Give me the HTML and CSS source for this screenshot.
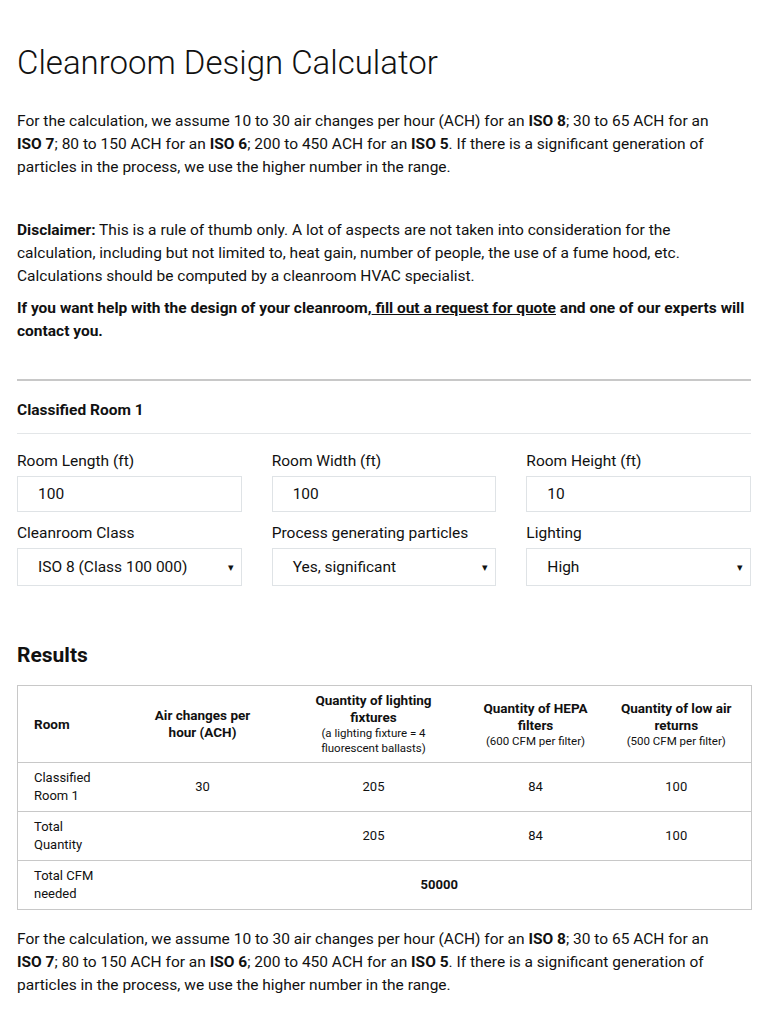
FILE: index.html
```html
<!DOCTYPE html>
<html>
<head>
    <title>Cleanroom Design Calculator</title>
    <link rel="stylesheet" href="styles.css">
</head>
<body>
    <div class="calculator">
        <h1>Cleanroom Design Calculator</h1>
        <p>For the calculation, we assume 10 to 30 air changes per hour (ACH) for an <strong>ISO&nbsp;8</strong>; 30 to 65 ACH for an <strong>ISO&nbsp;7</strong>; 80 to 150 ACH for an <strong>ISO&nbsp;6</strong>; 200 to 450 ACH for an <strong>ISO&nbsp;5</strong>. If there is a significant generation of particles in the process, we use the higher number in the range.</p>
        <p class="disclaimer"><strong>Disclaimer:</strong> This is a rule of thumb only. A lot of aspects are not taken into consideration for the calculation, including but not limited to, heat gain, number of people, the use of a fume hood, etc. Calculations should be computed by a cleanroom HVAC specialist.</p>
        <p class="cta"><strong>If you want help with the design of your cleanroom,<a href="#"> fill out a request for quote</a> and one of our experts will contact you.</strong></p>

        <div class="room">
            <h3 class="room-title">Classified Room 1</h3>
            <div class="fields">
                <label class="field">
                    <span class="field-label">Room Length (ft)</span>
                    <input type="text" value="100">
                </label>
                <label class="field">
                    <span class="field-label">Room Width (ft)</span>
                    <input type="text" value="100">
                </label>
                <label class="field">
                    <span class="field-label">Room Height (ft)</span>
                    <input type="text" value="10">
                </label>
                <label class="field">
                    <span class="field-label">Cleanroom Class</span>
                    <div class="select">
                        <span>ISO 8 (Class 100 000)</span>
                        <span class="arrow">&#9662;</span>
                    </div>
                </label>
                <label class="field">
                    <span class="field-label">Process generating particles</span>
                    <div class="select">
                        <span>Yes, significant</span>
                        <span class="arrow">&#9662;</span>
                    </div>
                </label>
                <label class="field">
                    <span class="field-label">Lighting</span>
                    <div class="select">
                        <span>High</span>
                        <span class="arrow">&#9662;</span>
                    </div>
                </label>
            </div>
        </div>

        <h2>Results</h2>
        <table class="results">
            <colgroup>
                <col class="col-room">
                <col class="col-ach">
                <col class="col-light">
                <col class="col-hepa">
                <col class="col-return">
            </colgroup>
            <thead>
                <tr>
                    <th class="room-col">Room</th>
                    <th>Air changes per hour (ACH)</th>
                    <th>Quantity of lighting fixtures<small>(a lighting fixture = 4 fluorescent ballasts)</small></th>
                    <th class="narrow">Quantity of HEPA filters<small>(600 CFM per filter)</small></th>
                    <th class="narrow">Quantity of low air returns<small>(500 CFM per filter)</small></th>
                </tr>
            </thead>
            <tbody>
                <tr>
                    <td class="room-col">Classified Room 1</td>
                    <td>30</td>
                    <td>205</td>
                    <td>84</td>
                    <td>100</td>
                </tr>
                <tr>
                    <td class="room-col">Total Quantity</td>
                    <td></td>
                    <td>205</td>
                    <td>84</td>
                    <td>100</td>
                </tr>
                <tr>
                    <td class="room-col">Total CFM needed</td>
                    <td colspan="4" class="total">50000</td>
                </tr>
            </tbody>
        </table>

        <p class="footer-note">For the calculation, we assume 10 to 30 air changes per hour (ACH) for an <strong>ISO&nbsp;8</strong>; 30 to 65 ACH for an <strong>ISO&nbsp;7</strong>; 80 to 150 ACH for an <strong>ISO&nbsp;6</strong>; 200 to 450 ACH for an <strong>ISO&nbsp;5</strong>. If there is a significant generation of particles in the process, we use the higher number in the range.</p>
    </div>
</body>
</html>
```

FILE: styles.css
```css
body {
    margin: 0;
    background-color: #ffffff;
    color: #111111;
    font-family: Roboto, "Liberation Sans", sans-serif;
    font-size: 15.5px;
    line-height: 23px;
}

.calculator {
    padding: 0 17px;
}

h1 {
    font-size: 33px;
    font-weight: 300;
    line-height: 40px;
    margin: 43px 0 27px;
}

p {
    margin: 0 0 9px;
}

strong {
    font-weight: 700;
}

.disclaimer {
    margin-top: 40px;
}

.cta a {
    color: #111111;
    text-decoration: underline;
}

/* Room input block */
.room {
    margin-top: 36px;
    border-top: 2px solid #c8c8c8;
}

.room-title {
    font-size: 15.5px;
    font-weight: 700;
    margin: 0;
    padding: 17px 0 11px;
    line-height: 24px;
    border-bottom: 1px solid #e3e6e8;
}

.fields {
    display: grid;
    grid-template-columns: repeat(3, minmax(0, 1fr));
    column-gap: 30px;
    row-gap: 10px;
    padding-top: 16px;
}

.field {
    display: flex;
    flex-direction: column;
    min-width: 0;
}

.field-label {
    line-height: 22px;
    margin-bottom: 4px;
}

.field input,
.select {
    box-sizing: border-box;
    width: 100%;
    height: 36px;
    border: 1px solid #dfe3e6;
    padding: 0 20px;
    font-family: inherit;
    font-size: 15.5px;
    color: #111111;
    background: #ffffff;
}

.select {
    display: flex;
    align-items: center;
    justify-content: space-between;
    height: 38px;
    padding-right: 7px;
}

.arrow {
    font-size: 11px;
}

h2 {
    font-size: 21px;
    font-weight: 700;
    margin: 56px 0 17px;
    line-height: 26px;
}

/* Results table */
.results {
    width: 100%;
    border-collapse: collapse;
    table-layout: fixed;
    border: 1px solid #c8c8c8;
    font-size: 13px;
    line-height: 18px;
}

.col-room { width: 110px; }
.col-ach { width: 150px; }
.col-light { width: 192px; }
.col-hepa { width: 132px; }
.col-return { width: 150px; }

.results th,
.results td {
    border-top: 1px solid #c8c8c8;
    text-align: center;
    padding: 6px 16px;
    vertical-align: middle;
}

.results th {
    height: 64px;
    font-weight: 700;
    font-size: 13.5px;
    line-height: 17px;
}

.results th.narrow {
    padding: 6px 12px;
}

.results th small {
    display: block;
    font-weight: 400;
    font-size: 11.5px;
    line-height: 15px;
}

.results td {
    height: 35px;
}

.results .room-col {
    text-align: left;
}

.results .total {
    font-weight: 700;
}

.footer-note {
    margin-top: 18px;
}
```
